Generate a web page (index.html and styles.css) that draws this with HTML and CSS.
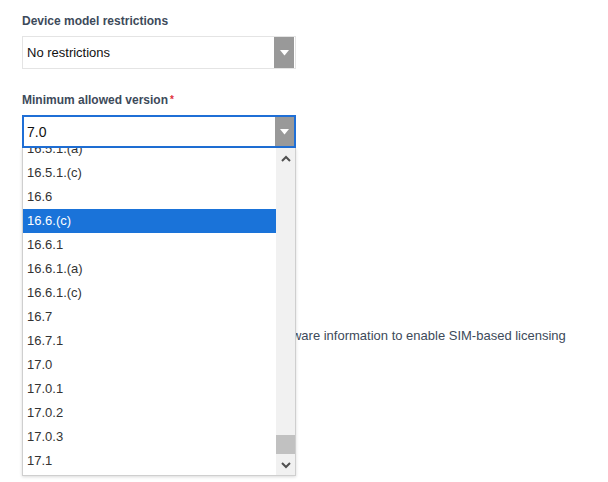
FILE: index.html
```html
<!DOCTYPE html>
<html>
<head>
<meta charset="utf-8">
<link rel="stylesheet" href="styles.css">
</head>
<body>
<div class="form">
  <div class="field">
    <div class="label">Device model restrictions</div>
    <div class="select">
      <span class="value">No restrictions</span>
      <span class="arrow"><svg width="9" height="6" viewBox="0 0 9 6"><path d="M0 0H9L4.5 5.5Z" fill="#fff"/></svg></span>
    </div>
  </div>
  <div class="field second">
    <div class="label">Minimum allowed version<span class="req">*</span></div>
    <div class="select focused">
      <span class="value">7.0</span>
      <span class="arrow"><svg width="9" height="6" viewBox="0 0 9 6"><path d="M0 0H9L4.5 5.5Z" fill="#fff"/></svg></span>
    </div>
    <div class="dropdown">
      <div class="options">
        <div class="items">
          <div class="opt">16.5.1.(a)</div>
          <div class="opt">16.5.1.(c)</div>
          <div class="opt">16.6</div>
          <div class="opt sel">16.6.(c)</div>
          <div class="opt">16.6.1</div>
          <div class="opt">16.6.1.(a)</div>
          <div class="opt">16.6.1.(c)</div>
          <div class="opt">16.7</div>
          <div class="opt">16.7.1</div>
          <div class="opt">17.0</div>
          <div class="opt">17.0.1</div>
          <div class="opt">17.0.2</div>
          <div class="opt">17.0.3</div>
          <div class="opt">17.1</div>
        </div>
      </div>
      <div class="scrollbar">
        <div class="sb-btn"><svg width="10" height="7" viewBox="0 0 10 7"><path d="M1 6L5 2L9 6" fill="none" stroke="#505050" stroke-width="2"/></svg></div>
        <div class="track"><div class="thumb"></div></div>
        <div class="sb-btn"><svg width="10" height="7" viewBox="0 0 10 7"><path d="M1 1L5 5L9 1" fill="none" stroke="#505050" stroke-width="2"/></svg></div>
      </div>
    </div>
  </div>
  <div class="behind">Use device hardware information to enable SIM-based licensing</div>
</div>
</body>
</html>
```

FILE: styles.css
```css
html, body {
  margin: 0;
  padding: 0;
  background: #fff;
}
body {
  min-height: 482px;
  font-family: "Liberation Sans", Arial, sans-serif;
  color: #333;
}
.form {
  padding: 14px 0 0 22px;
  min-height: 468px;
}
.field {
  width: 274px;
}
.field.second {
  position: relative;
  z-index: 2;
  margin-top: 24px;
}
.label {
  font-size: 12px;
  font-weight: bold;
  color: #3d4a5a;
  line-height: 14px;
  margin-bottom: 8px;
}
.req {
  color: #e0303a;
  font-size: 10px;
  margin-left: 2px;
  vertical-align: top;
}
.select {
  height: 33px;
  box-sizing: border-box;
  border: 1px solid #e4e4e4;
  display: flex;
  align-items: stretch;
  background: #fff;
}
.select .value {
  flex: 1;
  display: flex;
  align-items: center;
  padding-left: 4px;
  font-size: 13px;
  color: #111;
}
.select .arrow {
  width: 20px;
  margin: 0 1px 0 0;
  background: #999;
  display: flex;
  align-items: center;
  justify-content: center;
}
.select.focused {
  border: 2px solid #1f6fd6;
}
.select.focused .value {
  padding-left: 3px;
  font-size: 14px;
}
.select.focused .arrow {
  margin: 0;
  width: 19px;
}
.dropdown {
  position: absolute;
  left: 0;
  top: 55px;
  width: 274px;
  height: 328px;
  box-sizing: border-box;
  border: 1px solid #cfcfcf;
  border-top: none;
  background: #fff;
  box-shadow: 0 1px 3px rgba(0,0,0,0.15);
  display: flex;
}
.options {
  flex: 1;
  overflow: hidden;
}
.items {
  margin-top: -11px;
}
.opt {
  height: 24px;
  line-height: 24px;
  font-size: 13px;
  color: #333;
  padding-left: 4px;
}
.opt.sel {
  background: #1a73d9;
  color: #fff;
}
.scrollbar {
  width: 19px;
  background: #f1f1f1;
  display: flex;
  flex-direction: column;
}
.sb-btn {
  height: 20px;
  display: flex;
  align-items: center;
  justify-content: center;
}
.track {
  flex: 1;
  position: relative;
}
.thumb {
  position: absolute;
  left: 0;
  right: 0;
  bottom: 1px;
  height: 19px;
  background: #c1c1c1;
}
.behind {
  margin-top: 180px;
  font-size: 13px;
  color: #3d4a5a;
  padding-left: 176px;
}
```
